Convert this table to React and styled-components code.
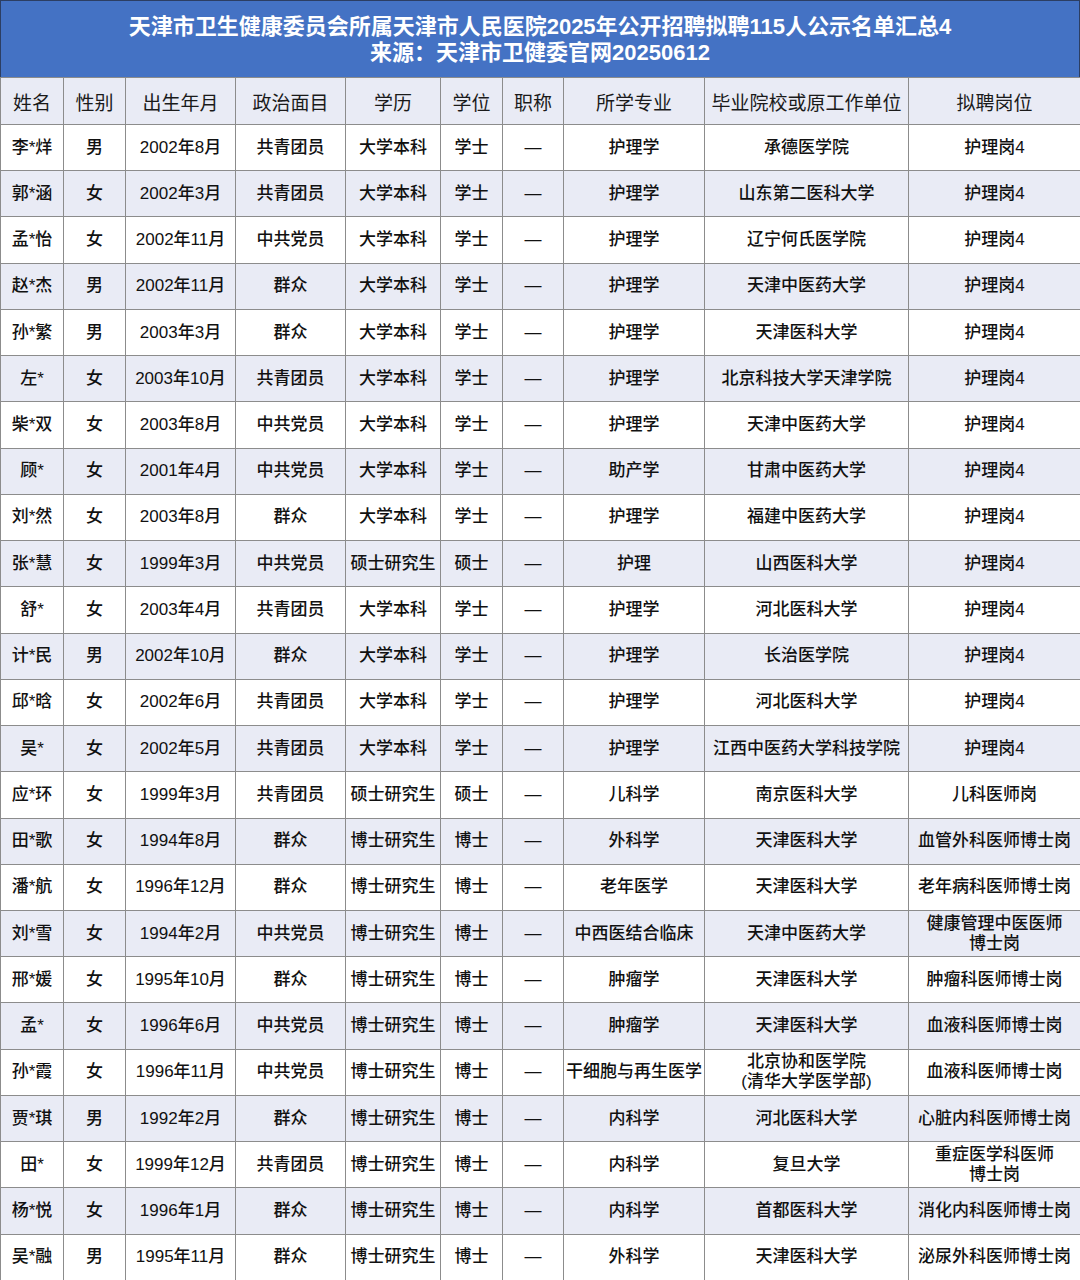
import React from 'react';
import styled, { createGlobalStyle } from 'styled-components';

const GlobalStyle = createGlobalStyle`
  html, body {
    margin: 0;
    padding: 0;
    background: #ffffff;
  }
  body {
    font-family: "Liberation Sans", "Noto Sans CJK SC", sans-serif;
  }
`

const columns = [
  { title: '姓名', width: 63 },
  { title: '性别', width: 62 },
  { title: '出生年月', width: 110 },
  { title: '政治面目', width: 110 },
  { title: '学历', width: 95 },
  { title: '学位', width: 62 },
  { title: '职称', width: 61 },
  { title: '所学专业', width: 141 },
  { title: '毕业院校或原工作单位', width: 204 },
  { title: '拟聘岗位', width: 172 },
]

const rows = [
  ['李*烊', '男', '2002年8月', '共青团员', '大学本科', '学士', '—', '护理学', '承德医学院', '护理岗4'],
  ['郭*涵', '女', '2002年3月', '共青团员', '大学本科', '学士', '—', '护理学', '山东第二医科大学', '护理岗4'],
  ['孟*怡', '女', '2002年11月', '中共党员', '大学本科', '学士', '—', '护理学', '辽宁何氏医学院', '护理岗4'],
  ['赵*杰', '男', '2002年11月', '群众', '大学本科', '学士', '—', '护理学', '天津中医药大学', '护理岗4'],
  ['孙*繁', '男', '2003年3月', '群众', '大学本科', '学士', '—', '护理学', '天津医科大学', '护理岗4'],
  ['左*', '女', '2003年10月', '共青团员', '大学本科', '学士', '—', '护理学', '北京科技大学天津学院', '护理岗4'],
  ['柴*双', '女', '2003年8月', '中共党员', '大学本科', '学士', '—', '护理学', '天津中医药大学', '护理岗4'],
  ['顾*', '女', '2001年4月', '中共党员', '大学本科', '学士', '—', '助产学', '甘肃中医药大学', '护理岗4'],
  ['刘*然', '女', '2003年8月', '群众', '大学本科', '学士', '—', '护理学', '福建中医药大学', '护理岗4'],
  ['张*慧', '女', '1999年3月', '中共党员', '硕士研究生', '硕士', '—', '护理', '山西医科大学', '护理岗4'],
  ['舒*', '女', '2003年4月', '共青团员', '大学本科', '学士', '—', '护理学', '河北医科大学', '护理岗4'],
  ['计*民', '男', '2002年10月', '群众', '大学本科', '学士', '—', '护理学', '长治医学院', '护理岗4'],
  ['邱*晗', '女', '2002年6月', '共青团员', '大学本科', '学士', '—', '护理学', '河北医科大学', '护理岗4'],
  ['吴*', '女', '2002年5月', '共青团员', '大学本科', '学士', '—', '护理学', '江西中医药大学科技学院', '护理岗4'],
  ['应*环', '女', '1999年3月', '共青团员', '硕士研究生', '硕士', '—', '儿科学', '南京医科大学', '儿科医师岗'],
  ['田*歌', '女', '1994年8月', '群众', '博士研究生', '博士', '—', '外科学', '天津医科大学', '血管外科医师博士岗'],
  ['潘*航', '女', '1996年12月', '群众', '博士研究生', '博士', '—', '老年医学', '天津医科大学', '老年病科医师博士岗'],
  ['刘*雪', '女', '1994年2月', '中共党员', '博士研究生', '博士', '—', '中西医结合临床', '天津中医药大学', '健康管理中医医师\n博士岗'],
  ['邢*媛', '女', '1995年10月', '群众', '博士研究生', '博士', '—', '肿瘤学', '天津医科大学', '肿瘤科医师博士岗'],
  ['孟*', '女', '1996年6月', '中共党员', '博士研究生', '博士', '—', '肿瘤学', '天津医科大学', '血液科医师博士岗'],
  ['孙*霞', '女', '1996年11月', '中共党员', '博士研究生', '博士', '—', '干细胞与再生医学', '北京协和医学院\n(清华大学医学部)', '血液科医师博士岗'],
  ['贾*琪', '男', '1992年2月', '群众', '博士研究生', '博士', '—', '内科学', '河北医科大学', '心脏内科医师博士岗'],
  ['田*', '女', '1999年12月', '共青团员', '博士研究生', '博士', '—', '内科学', '复旦大学', '重症医学科医师\n博士岗'],
  ['杨*悦', '女', '1996年1月', '群众', '博士研究生', '博士', '—', '内科学', '首都医科大学', '消化内科医师博士岗'],
  ['吴*融', '男', '1995年11月', '群众', '博士研究生', '博士', '—', '外科学', '天津医科大学', '泌尿外科医师博士岗'],
]

function App() {
  return (
    <Page>
      <GlobalStyle />
      <TitleBar>
        <TitleLine>天津市卫生健康委员会所属天津市人民医院2025年公开招聘拟聘115人公示名单汇总4</TitleLine>
        <TitleLine>来源：天津市卫健委官网20250612</TitleLine>
      </TitleBar>
      <Table>
        <colgroup>
          {columns.map((c) => (
            <col key={c.title} style={{ width: c.width }} />
          ))}
        </colgroup>
        <thead>
          <HeadRow>
            {columns.map((c) => (
              <HeadCell key={c.title}>{c.title}</HeadCell>
            ))}
          </HeadRow>
        </thead>
        <tbody>
          {rows.map((row, i) => (
            <BodyRow key={i} $striped={i % 2 === 1}>
              {row.map((cell, j) => (
                <Cell key={j}>{cell}</Cell>
              ))}
            </BodyRow>
          ))}
        </tbody>
      </Table>
    </Page>
  )
}

const Page = styled.div`
  width: 1080px;
  height: 1280px;
  overflow: hidden;
  background: #ffffff;
`
const TitleBar = styled.header`
  box-sizing: border-box;
  height: 77px;
  display: flex;
  flex-direction: column;
  justify-content: center;
  align-items: center;
  background: #4472c4;
  border: 1px solid #2c3e63;
  border-bottom: none;
  padding-top: 1px;
`
const TitleLine = styled.div`
  font-family: "Liberation Sans", "Noto Sans CJK SC", sans-serif;
  font-size: 22px;
  font-weight: 700;
  line-height: 26px;
  color: #ffffff;
  white-space: nowrap;
`
const Table = styled.table`
  width: 1080px;
  table-layout: fixed;
  border-collapse: collapse;
  color: #111111;
`
const HeadRow = styled.tr`
  height: 47px;
  background: #e9ebf5;
`
const HeadCell = styled.th`
  padding: 0;
  border: 1px solid #8c8c8c;
  font-family: "Noto Sans CJK SC", sans-serif;
  font-size: 19px;
  font-weight: 400;
  color: #1a1a1a;
  text-align: center;
  white-space: nowrap;
  overflow: hidden;
`
const BodyRow = styled.tr`
  height: 46.24px;
  background: ${(p) => (p.$striped ? '#e9ebf5' : '#ffffff')};
`
const Cell = styled.td`
  padding: 0;
  border: 1px solid #8c8c8c;
  font-family: "Liberation Sans", "Noto Sans CJK SC", sans-serif;
  font-size: 17px;
  font-weight: 500;
  line-height: 20px;
  text-align: center;
  white-space: pre-line;
  overflow: hidden;
`

export default App
